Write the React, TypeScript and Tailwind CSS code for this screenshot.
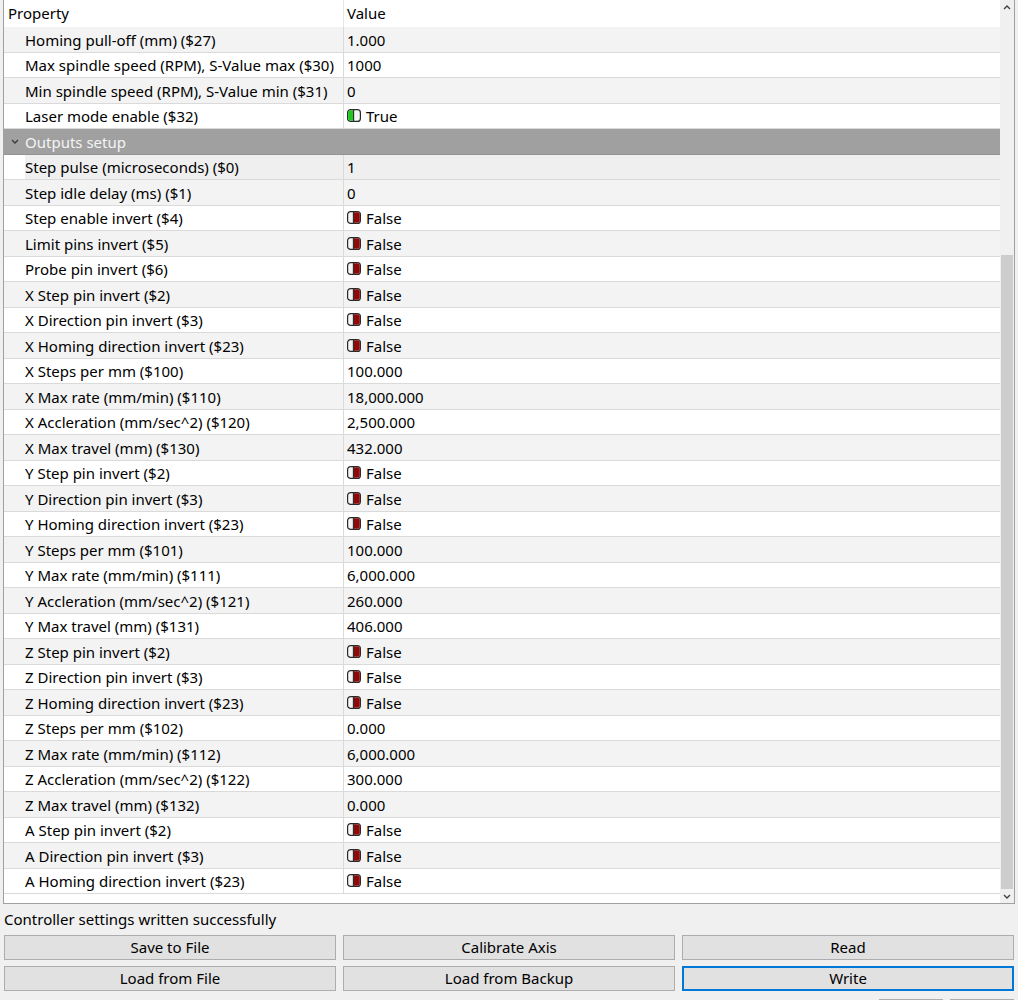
import React from "react";

type Item = { label: string; value: string };

const top: Item[] = [
  { label: "Homing pull-off (mm) ($27)", value: "1.000" },
  { label: "Max spindle speed (RPM), S-Value max ($30)", value: "1000" },
  { label: "Min spindle speed (RPM), S-Value min ($31)", value: "0" },
  { label: "Laser mode enable ($32)", value: "True" },
];

const outputs: Item[] = [
  { label: "Step pulse (microseconds) ($0)", value: "1" },
  { label: "Step idle delay (ms) ($1)", value: "0" },
  { label: "Step enable invert ($4)", value: "False" },
  { label: "Limit pins invert ($5)", value: "False" },
  { label: "Probe pin invert ($6)", value: "False" },
  { label: "X Step pin invert ($2)", value: "False" },
  { label: "X Direction pin invert ($3)", value: "False" },
  { label: "X Homing direction invert ($23)", value: "False" },
  { label: "X Steps per mm ($100)", value: "100.000" },
  { label: "X Max rate (mm/min) ($110)", value: "18,000.000" },
  { label: "X Accleration (mm/sec^2) ($120)", value: "2,500.000" },
  { label: "X Max travel (mm) ($130)", value: "432.000" },
  { label: "Y Step pin invert ($2)", value: "False" },
  { label: "Y Direction pin invert ($3)", value: "False" },
  { label: "Y Homing direction invert ($23)", value: "False" },
  { label: "Y Steps per mm ($101)", value: "100.000" },
  { label: "Y Max rate (mm/min) ($111)", value: "6,000.000" },
  { label: "Y Accleration (mm/sec^2) ($121)", value: "260.000" },
  { label: "Y Max travel (mm) ($131)", value: "406.000" },
  { label: "Z Step pin invert ($2)", value: "False" },
  { label: "Z Direction pin invert ($3)", value: "False" },
  { label: "Z Homing direction invert ($23)", value: "False" },
  { label: "Z Steps per mm ($102)", value: "0.000" },
  { label: "Z Max rate (mm/min) ($112)", value: "6,000.000" },
  { label: "Z Accleration (mm/sec^2) ($122)", value: "300.000" },
  { label: "Z Max travel (mm) ($132)", value: "0.000" },
  { label: "A Step pin invert ($2)", value: "False" },
  { label: "A Direction pin invert ($3)", value: "False" },
  { label: "A Homing direction invert ($23)", value: "False" },
];

function Toggle({ on }: { on: boolean }) {
  return (
    <svg width="14" height="13" viewBox="0 0 14 13" className="shrink-0">
      <rect x="0.6" y="0.6" width="12.8" height="11.8" rx="3" fill="#f4f4f4" stroke="#2a2a2a" strokeWidth="1.2" />
      {on ? (
        <path d="M3.6 1.2 H6.4 V11.8 H3.6 A2.4 2.4 0 0 1 1.2 9.4 V3.6 A2.4 2.4 0 0 1 3.6 1.2 Z" fill="#1ec81e" />
      ) : (
        <path d="M6.6 1.2 H10.4 A2.4 2.4 0 0 1 12.8 3.6 V9.4 A2.4 2.4 0 0 1 10.4 11.8 H6.6 Z" fill="#8e0a0a" />
      )}
      <line x1={on ? 6.6 : 6.4} y1="1" x2={on ? 6.6 : 6.4} y2="12" stroke="#2a2a2a" strokeWidth="1.1" />
    </svg>
  );
}

function Value({ v }: { v: string }) {
  if (v === "True" || v === "False") {
    return (
      <div className="flex items-center gap-[5px]">
        <Toggle on={v === "True"} />
        <span className="pt-[2px]">{v}</span>
      </div>
    );
  }
  return <span className="pt-[2px]">{v}</span>;
}

function Row({ item, bg, indent }: { item: Item; bg: string; indent: string }) {
  return (
    <div className={`flex h-[25.5px] border-b border-[#dadada] ${bg}`}>
      <div className={`w-[21px] shrink-0 ${indent}`} />
      <div className="w-[319px] shrink-0 flex items-center pt-[2px] border-r border-[#dadada] whitespace-nowrap overflow-hidden">
        {item.label}
      </div>
      <div className="flex-1 flex items-center pl-[3px] whitespace-nowrap">
        <Value v={item.value} />
      </div>
    </div>
  );
}

function Btn({ label, focused }: { label: string; focused?: boolean }) {
  return (
    <div
      className={
        focused
          ? "h-[25px] bg-[#e1e1e1] border-2 border-[#0078d7] flex items-center justify-center"
          : "h-[25px] bg-[#e1e1e1] border border-[#adadad] flex items-center justify-center"
      }
    >
      {label}
    </div>
  );
}

export default function App() {
  return (
    <div className="w-[1018px] h-[1000px] overflow-hidden bg-[#f0f0f0] text-[15px] text-black font-['Noto_Sans',sans-serif] leading-none">
      <div className="ml-[3px] w-[1012px] h-[904px] border-l border-r border-b border-[#a0a0a0] flex">
        <div className="w-[996px] h-full bg-white overflow-hidden">
          <div className="flex h-[27px] bg-white">
            <div className="w-[340px] shrink-0 flex items-center pl-[4px] border-r border-[#e6e6e6]">Property</div>
            <div className="flex-1 flex items-center pl-[3px]">Value</div>
          </div>
          {top.map((it, i) => (
            <Row
              key={it.label}
              item={it}
              bg={i % 2 === 0 ? "bg-[#f3f3f3]" : "bg-white"}
              indent=""
            />
          ))}
          <div className="flex items-center h-[25.5px] bg-[#a0a0a0] border-b border-[#939393]">
            <div className="w-[21px] shrink-0 flex justify-center">
              <svg width="8" height="5" viewBox="0 0 8 5">
                <path d="M1 1 L4 4 L7 1" fill="none" stroke="#3a3a3a" strokeWidth="1.3" />
              </svg>
            </div>
            <span className="text-[#f4f4f4] pt-[2px]">Outputs setup</span>
          </div>
          {outputs.map((it, i) => (
            <Row
              key={it.label + i}
              item={it}
              bg={i === 0 ? "bg-[#efefef]" : i % 2 === 1 ? "bg-[#f3f3f3]" : "bg-white"}
              indent={i === 0 ? "bg-white" : ""}
            />
          ))}
        </div>
        <div className="w-[14px] h-full flex flex-col bg-[#f0f0f0]">
          <div className="h-[14px] flex items-center justify-center">
            <svg width="8" height="5" viewBox="0 0 8 5">
              <path d="M1 4 L4 1 L7 4" fill="none" stroke="#404040" strokeWidth="1.4" />
            </svg>
          </div>
          <div className="h-[241px]" />
          <div className="flex-1 mx-[1px] bg-[#cdcdcd]" />
          <div className="h-[14px] flex items-center justify-center">
            <svg width="8" height="5" viewBox="0 0 8 5">
              <path d="M1 1 L4 4 L7 1" fill="none" stroke="#404040" strokeWidth="1.4" />
            </svg>
          </div>
        </div>
      </div>
      <div className="h-[31px] flex items-center pl-[4px]">Controller settings written successfully</div>
      <div className="ml-[4px] w-[1010px] grid grid-cols-3 gap-x-[7px] gap-y-[6px]">
        <Btn label="Save to File" />
        <Btn label="Calibrate Axis" />
        <Btn label="Read" />
        <Btn label="Load from File" />
        <Btn label="Load from Backup" />
        <Btn label="Write" focused />
      </div>
      <div className="flex justify-end gap-[7px] mt-[8px] w-[1014px]">
        <div className="w-[64px] h-[25px] bg-[#e1e1e1] border border-[#adadad]" />
        <div className="w-[64px] h-[25px] bg-[#e1e1e1] border border-[#adadad]" />
      </div>
    </div>
  );
}
